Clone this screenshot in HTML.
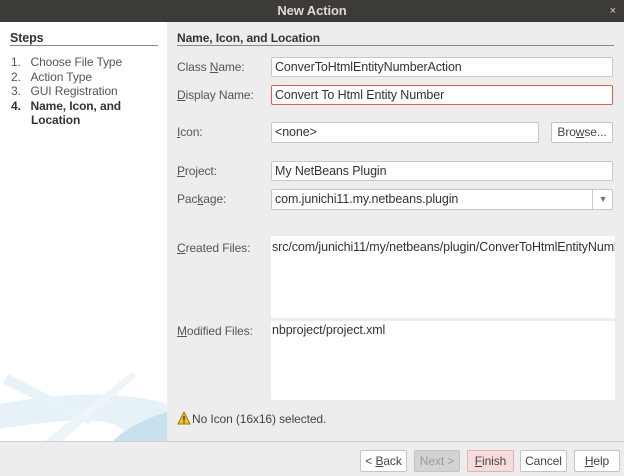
<!DOCTYPE html>
<html><head><style>
*{margin:0;padding:0;box-sizing:border-box}
body{width:624px;height:476px;background:#ededed;font-family:"Liberation Sans",sans-serif;font-size:12px;letter-spacing:-0.1px;color:#3c3c3c;position:relative;overflow:hidden}
.a{position:absolute}
.title{left:0;top:0;width:624px;height:22px;background:#3c3b37;color:#dfdbd2;font-weight:bold;font-size:13px;text-align:center;line-height:22px}
.left{left:0;top:22px;width:167px;height:419px;background:#fff}
.f{position:absolute;background:#fff;border:1px solid #c8c8c8;border-radius:2px;padding-left:3px;line-height:18px;white-space:nowrap;overflow:hidden;color:#333;font-size:12.5px}
.l{position:absolute;left:177px;color:#555}
.b{position:absolute;top:450px;height:22px;border:1px solid #c4c4c4;border-radius:2px;background:#fff;text-align:center;line-height:20px;color:#444}
u{text-decoration:underline}
</style></head><body>
<div class="a title">New Action<span style="position:absolute;right:8px;font-weight:normal;font-size:11px">×</span></div>
<div class="a left">
<svg class="a" style="left:0;top:342px" width="167" height="77" viewBox="0 0 167 77">
<path d="M0 40 C50 30 120 25 167 40 L167 77 L125 77 C130 55 90 50 0 65Z" fill="#dcedf5" opacity=".7"/>
<path d="M8 10 L95 55 L88 60 L3 20Z" fill="#e8f3f9"/>
<path d="M132 8 L45 77 L62 77 L137 12Z" fill="#ebf5fa"/>
<path d="M167 48 C140 56 122 68 113 77 L167 77Z" fill="#c7e2ee"/>
</svg>
<div class="a" style="left:10px;top:9px;font-weight:bold;color:#333;font-size:12.5px">Steps</div>
<div class="a" style="left:10px;top:23px;width:148px;border-top:1px solid #888"></div>
<div class="a" style="left:11px;top:33px;line-height:14.5px;color:#555">
<div>1.&nbsp;&nbsp;&nbsp;Choose File Type</div><div>2.&nbsp;&nbsp;&nbsp;Action Type</div><div>3.&nbsp;&nbsp;&nbsp;GUI Registration</div>
<div style="font-weight:bold;color:#333">4.&nbsp;&nbsp;&nbsp;Name, Icon, and<br><span style="padding-left:20px">Location</span></div></div>
</div>
<div class="a" style="left:177px;top:31px;font-weight:bold;color:#333">Name, Icon, and Location</div>
<div class="a" style="left:177px;top:45px;width:437px;border-top:1px solid #888"></div>
<div class="l" style="top:60px">Class <u>N</u>ame:</div>
<div class="f" style="left:271px;top:57px;width:342px;height:20px">ConverToHtmlEntityNumberAction</div>
<div class="l" style="top:88px"><u>D</u>isplay Name:</div>
<div class="f" style="left:271px;top:85px;width:342px;height:20px;border-color:#e05a55">Convert To Html Entity Number</div>
<div class="l" style="top:125px"><u>I</u>con:</div>
<div class="f" style="left:271px;top:122px;width:268px;height:21px">&lt;none&gt;</div>
<div class="b" style="left:551px;top:122px;width:62px;height:21px;line-height:19px">Bro<u>w</u>se...</div>
<div class="l" style="top:164px"><u>P</u>roject:</div>
<div class="f" style="left:271px;top:161px;width:342px;height:20px">My NetBeans Plugin</div>
<div class="l" style="top:192px">Pac<u>k</u>age:</div>
<div class="f" style="left:271px;top:189px;width:342px;height:21px">com.junichi11.my.netbeans.plugin<span style="position:absolute;left:320px;top:0;width:21px;height:19px;border-left:1px solid #ccc;text-align:center;font-size:9px;color:#777">▼</span></div>
<div class="l" style="top:241px"><u>C</u>reated Files:</div>
<div class="f" style="left:271px;top:236px;width:344px;height:82px;border:none;line-height:22px;padding-left:1px">src/com/junichi11/my/netbeans/plugin/ConverToHtmlEntityNumberAction.java</div>
<div class="l" style="top:324px"><u>M</u>odified Files:</div>
<div class="f" style="left:271px;top:321px;width:344px;height:79px;border:none;line-height:18px;padding-left:1px">nbproject/project.xml</div>
<svg class="a" style="left:177px;top:411px" width="14" height="14"><path d="M7 1 L13 13 L1 13Z" fill="#f3c322" stroke="#9a7a10"/><rect x="6.3" y="5" width="1.4" height="4.5" fill="#333"/><rect x="6.3" y="10.5" width="1.4" height="1.4" fill="#333"/></svg>
<div class="a" style="left:192px;top:412px;color:#444">No Icon (16x16) selected.</div>
<div class="a" style="left:0;top:441px;width:624px;border-top:1px solid #cfcfcf"></div>
<div class="b" style="left:360px;width:47px">&lt; <u>B</u>ack</div>
<div class="b" style="left:414px;width:46px;background:#d3d3d3;color:#999">Next &gt;</div>
<div class="b" style="left:467px;width:47px;background:#f8dcdc;border-color:#d9b5b5"><u>F</u>inish</div>
<div class="b" style="left:520px;width:47px">Cancel</div>
<div class="b" style="left:574px;width:46px"><u>H</u>elp</div>
</body></html>
